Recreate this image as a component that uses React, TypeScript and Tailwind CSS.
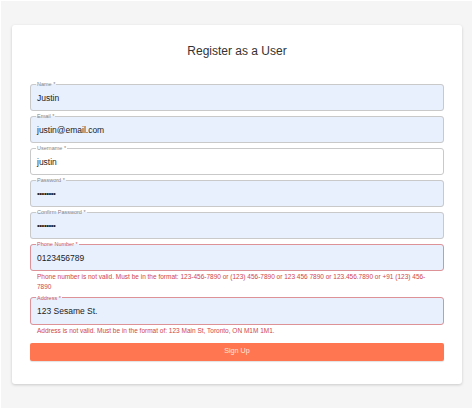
import React from "react";

type Field = {
  label: string;
  value: string;
  filled?: boolean;
  error?: string;
  password?: boolean;
};

const fields: Field[] = [
  { label: "Name *", value: "Justin", filled: true },
  { label: "Email *", value: "justin@email.com", filled: true },
  { label: "Username *", value: "justin" },
  { label: "Password *", value: "••••••••", filled: true, password: true },
  { label: "Confirm Password *", value: "••••••••", filled: true, password: true },
  {
    label: "Phone Number *",
    value: "0123456789",
    filled: true,
    error:
      "Phone number is not valid. Must be in the format: 123-456-7890 or (123) 456-7890 or 123 456 7890 or 123.456.7890 or +91 (123) 456-7890",
  },
  {
    label: "Address *",
    value: "123 Sesame St.",
    filled: true,
    error: "Address is not valid. Must be in the format of: 123 Main St, Toronto, ON M1M 1M1.",
  },
];

function TextField({ f }: { f: Field }) {
  const border = f.error ? "border-[#dc9296]" : "border-[#c9c9c9]";
  const bg = f.filled ? "bg-[#e8f0fe]" : "bg-white";
  return (
    <div className="mt-[2px]">
      <fieldset className={`border ${border} ${bg} rounded-[3px] pl-[5px] pr-[6px] pb-[1px]`}>
        <legend
          className={`px-[1px] text-[5.5px] leading-[6px] ${f.error ? "text-[#d0575c]" : "text-[#858585]"}`}
        >
          {f.label}
        </legend>
        <div
          className={`h-[22px] flex items-center pl-px text-[#222] ${
            f.password ? "text-[8px] tracking-[-0.5px]" : "text-[8.5px]"
          }`}
        >
          {f.value}
        </div>
      </fieldset>
      {f.error && (
        <p className="ml-[7px] mr-[14px] mt-[1px] text-[6.5px] leading-[10.4px] text-[#d0454b]">{f.error}</p>
      )}
    </div>
  );
}

export default function App() {
  return (
    <div className="bg-white pt-px pl-px pr-[2px] pb-[3px] font-['Liberation_Sans',Arial,sans-serif]">
      <div className="bg-[#f5f5f5] h-[407px] pl-[11px] pr-[10px] pt-[24px]">
        <div className="bg-white rounded-[3px] shadow-[0_1px_3px_rgba(0,0,0,0.18)] px-[18px] pt-[19px] pb-[23px]">
          <h1 className="text-center text-[12px] leading-[14px] text-[#333]">Register as a User</h1>
          <div className="mt-[21px] flex flex-col">
            {fields.map((f) => (
              <TextField key={f.label} f={f} />
            ))}
          </div>
          <button className="mt-[4px] w-full h-[18px] rounded-[2px] bg-[#ff7650] text-[7.2px] text-[#ffe3d8] shadow-[0_1px_1px_rgba(0,0,0,0.12)]">
            Sign Up
          </button>
        </div>
      </div>
    </div>
  );
}
